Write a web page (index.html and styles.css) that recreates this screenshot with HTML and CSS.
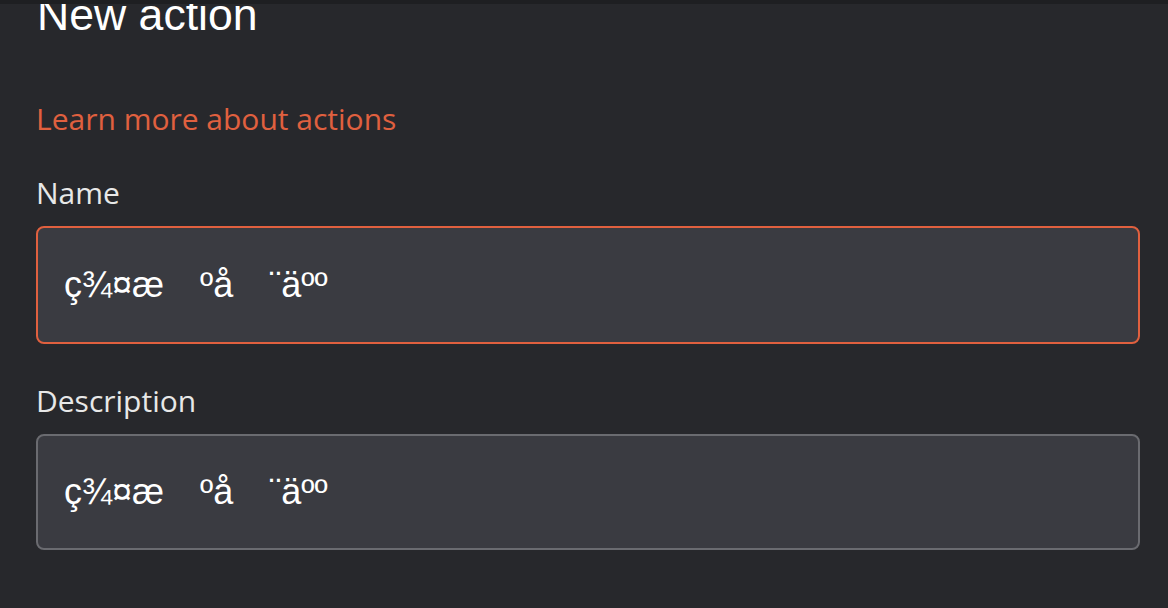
FILE: index.html
```html
<!DOCTYPE html>
<html lang="en">
<head>
<meta charset="utf-8">
<title>New action</title>
<link rel="stylesheet" href="styles.css">
</head>
<body>
<div class="topbar"></div>
<main class="panel">
  <h1 class="title">New action</h1>
  <a class="learn" href="#">Learn more about actions</a>
  <label class="field field-name">
    <span class="label">Name</span>
    <input class="input input-focus" type="text" value="ç¾¤æ&#8195;ºå&#8195;¨äºº">
  </label>
  <label class="field field-desc">
    <span class="label">Description</span>
    <input class="input input-desc" type="text" value="ç¾¤æ&#8195;ºå&#8195;¨äºº">
  </label>
</main>
</body>
</html>
```

FILE: styles.css
```css
html, body {
  margin: 0;
  padding: 0;
  background: #27282c;
  height: 100%;
  overflow: hidden;
}

.topbar {
  position: relative;
  z-index: 1;
  height: 4px;
  background: #1e1f22;
}

.panel {
  display: flex;
  flex-direction: column;
  padding: 0 28px 0 36px;
}

.title {
  margin: 0;
  padding-left: 1px;
  font-family: "Liberation Sans", Arial, sans-serif;
  font-weight: 400;
  font-size: 44.6px;
  line-height: 21px;
  color: #ffffff;
}

.learn {
  margin-top: 75px;
  font-family: "Open Sans", "Noto Sans", sans-serif;
  font-size: 30px;
  line-height: 38px;
  color: #e0603f;
  text-decoration: none;
  align-self: flex-start;
}

.field {
  display: flex;
  flex-direction: column;
  gap: 14px;
}

.field-name {
  margin-top: 36px;
}

.field-desc {
  margin-top: 38px;
}

.label {
  font-family: "Open Sans", "Noto Sans", sans-serif;
  font-size: 30px;
  line-height: 38px;
  color: #e8e8e8;
}

.input {
  box-sizing: border-box;
  width: 1104px;
  margin: 0;
  padding: 0 0 0 26px;
  border: 2px solid #6a6b70;
  border-radius: 8px;
  background: #3a3b41;
  color: #ffffff;
  font-family: "Liberation Sans", Arial, sans-serif;
  font-size: 36px;
  outline: none;
}

.input-focus {
  height: 118px;
  border-color: #e0603f;
}

.input-desc {
  height: 116px;
}
```
